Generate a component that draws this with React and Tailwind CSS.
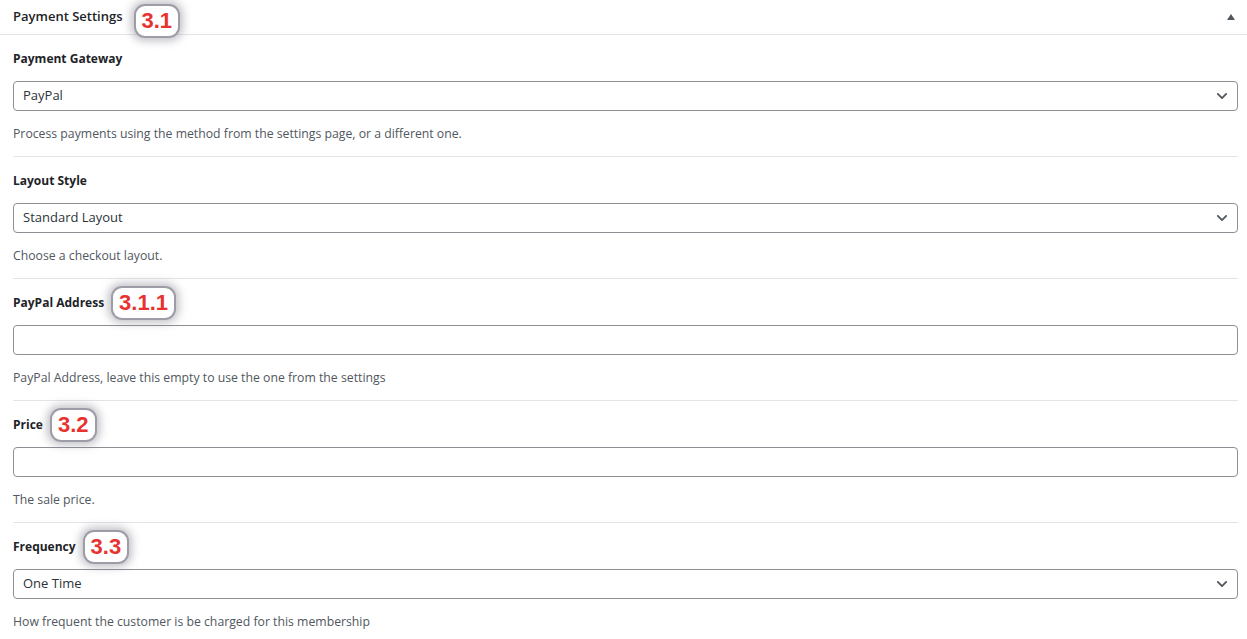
import React from "react";

const sections = [
  { label: "Payment Gateway", type: "select", value: "PayPal", help: "Process payments using the method from the settings page, or a different one." },
  { label: "Layout Style", type: "select", value: "Standard Layout", help: "Choose a checkout layout." },
  { label: "PayPal Address", badge: "3.1.1", type: "input", help: "PayPal Address, leave this empty to use the one from the settings" },
  { label: "Price", badge: "3.2", type: "input", help: "The sale price." },
  { label: "Frequency", badge: "3.3", type: "select", value: "One Time", help: "How frequent the customer is be charged for this membership" },
];

function Badge({ text, className = "" }) {
  return (
    <span
      className={
        "inline-flex h-[30px] items-center rounded-[9px] bg-white px-[6px] font-['Liberation_Sans',Arial,sans-serif] text-[22px] leading-none font-bold text-[#e8322f] shadow-[0_0_0_2px_#9d9da8,0_0_8px_5px_rgba(120,120,132,0.45)] " +
        className
      }
    >
      {text}
    </span>
  );
}

function Chevron() {
  return (
    <svg width="14" height="14" viewBox="0 0 20 20" className="text-[#50575e]">
      <path d="M4 7l6 6 6-6" fill="none" stroke="currentColor" strokeWidth="2.6" strokeLinecap="round" strokeLinejoin="round" />
    </svg>
  );
}

function Field({ f, first }) {
  return (
    <div className={first ? "pt-[14px] pb-[12px]" : "border-t border-[#e2e4e7] pt-[14px] pb-[12px]"}>
      <div className="flex h-[20px] items-center text-[12px] font-bold text-[#1d2327]">
        {f.label}
        {f.badge && <Badge text={f.badge} className="ml-[9px]" />}
      </div>
      {f.type === "select" ? (
        <div className="mt-[12px] flex h-[30px] items-center justify-between rounded-[4px] border border-[#8c8f94] pr-[8px] pl-[9px] text-[13px] text-[#2c3338]">
          <span>{f.value}</span>
          <Chevron />
        </div>
      ) : (
        <div className="mt-[12px] h-[30px] rounded-[4px] border border-[#8c8f94]" />
      )}
      <p className="mt-[13px] h-[20px] text-[12.25px] leading-[20px] text-[#50575e]">{f.help}</p>
    </div>
  );
}

export default function App() {
  return (
    <div className="h-[639px] w-[1247px] overflow-hidden bg-white font-['Open_Sans',sans-serif]">
      <div className="flex h-[35px] items-center justify-between border-b border-[#e2e4e7] pr-[12px] pl-[13px]">
        <div className="flex items-center text-[13px] font-semibold text-[#1d2327]">
          Payment Settings
          <Badge text="3.1" className="ml-[13px] mt-[8px]" />
        </div>
        <svg width="8" height="6" viewBox="0 0 8 6" className="text-[#50575e]">
          <path d="M0 6L4 0l4 6z" fill="currentColor" />
        </svg>
      </div>
      <div className="pr-[9px] pl-[13px]">
        {sections.map((f, i) => (
          <Field key={f.label} f={f} first={i === 0} />
        ))}
      </div>
    </div>
  );
}
